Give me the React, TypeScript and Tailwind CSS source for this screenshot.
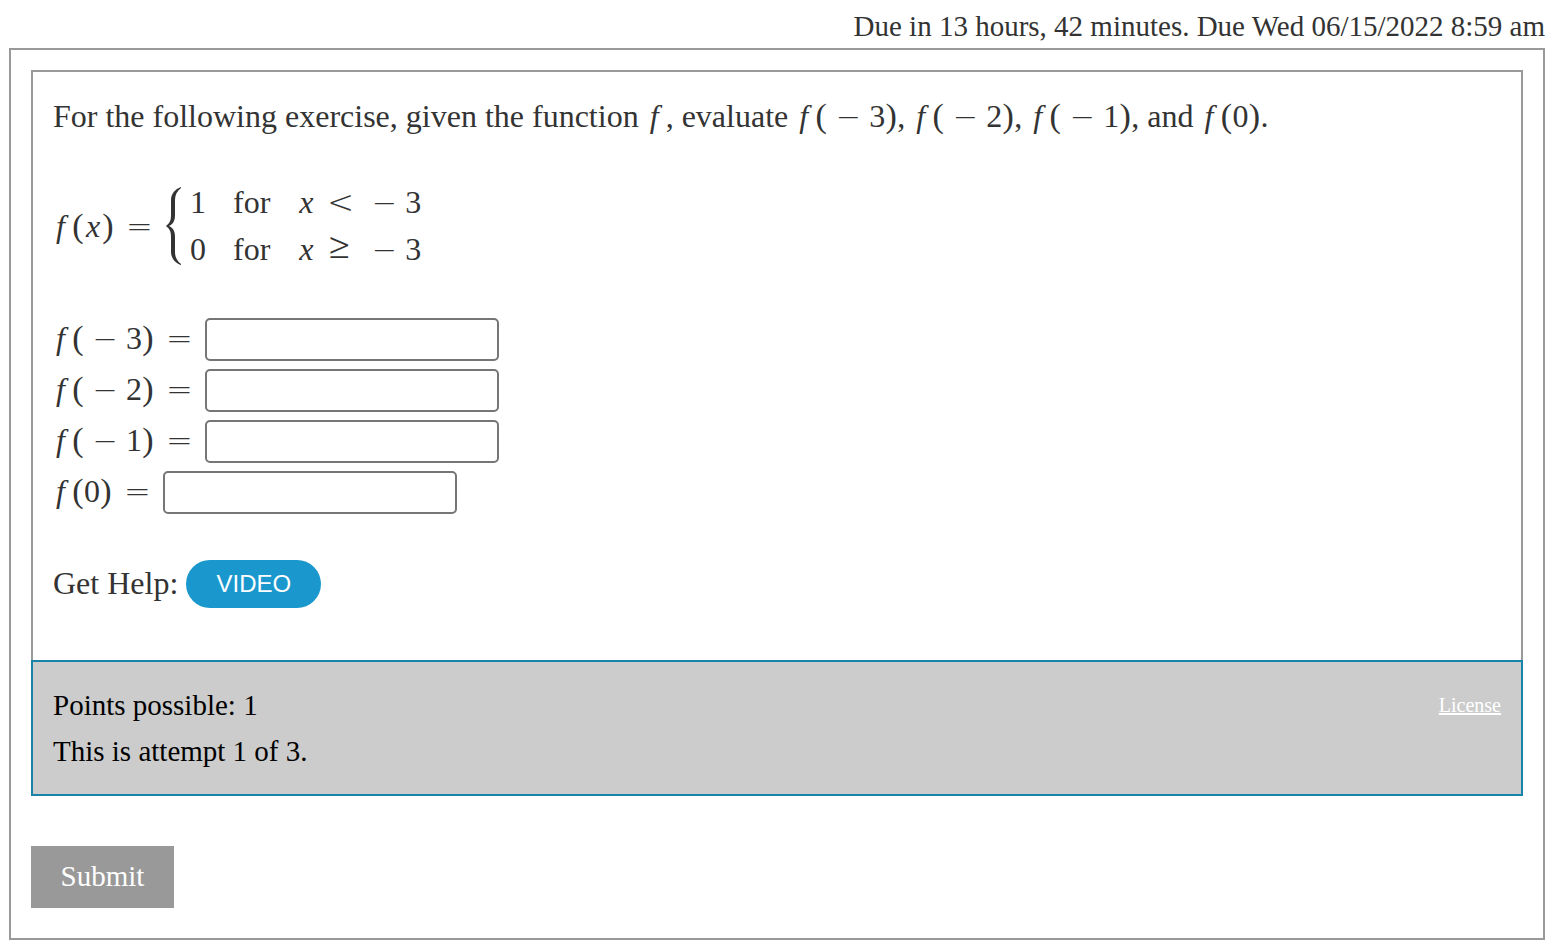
import React from 'react'

type Token = { text: string; kind: 'fn' | 'var' | 'open' | 'close' | 'digit' | 'sign' | 'rel' | 'relWide' | 'word' }

const tokenStyles = {
  fn: 'w-[19px] pl-[3px] text-left italic',
  var: 'w-[18px] text-center italic',
  open: 'w-3 text-center text-[34px]',
  close: 'w-3 text-center text-[34px]',
  digit: 'w-4 text-center',
  sign: 'w-[42px] text-center font-["DejaVu_Sans"] text-[30px] font-extralight',
  rel: 'mx-3 w-6 text-center font-["DejaVu_Sans"] text-[32px] font-extralight',
  // DejaVu's extra light cut has no glyph for ≥
  relWide: 'mx-3 flex w-6 justify-center font-["Inter"] text-[42px] leading-8 font-extralight',
  word: 'text-left',
}

function MathText({ tokens }: { tokens: Token[] }) {
  return (
    <span className="inline-flex h-[46px] items-baseline text-[32px] leading-[46px]">
      {tokens.map((token, idx) => (
        <span key={idx} className={tokenStyles[token.kind]}>
          {token.text}
        </span>
      ))}
    </span>
  )
}

// f(arg), where a negative argument gets its own sign token
function call(arg: string): Token[] {
  const tokens: Token[] = [
    { text: 'f', kind: 'fn' },
    { text: '(', kind: 'open' },
  ]
  if (arg.startsWith('-')) tokens.push({ text: '−', kind: 'sign' })
  tokens.push({ text: arg.replace('-', ''), kind: arg === 'x' ? 'var' : 'digit' })
  tokens.push({ text: ')', kind: 'close' })
  return tokens
}

const equals: Token = { text: '=', kind: 'rel' }

const cases: { value: string; relation: Token }[] = [
  { value: '1', relation: { text: '<', kind: 'rel' } },
  { value: '0', relation: { text: '≥', kind: 'relWide' } },
]

const answers = ['-3', '-2', '-1', '0']

function Piecewise() {
  return (
    <div className="flex items-center">
      <MathText tokens={[...call('x'), equals]} />
      <svg className="ml-1 h-20 w-4 shrink-0" viewBox="0 0 16 80" fill="#333" aria-hidden="true">
        <path d="M15 1C9 3 5 8 5 14V29C5 34 4 37 0 40C4 43 5 46 5 51V66C5 72 9 77 15 79V78C11 75 9 71 9 66V51C9 45 7 42 3 40C7 38 9 35 9 29V14C9 9 11 5 15 2Z" />
      </svg>
      <div className="ml-2 flex flex-col">
        {cases.map((row) => (
          <div key={row.value} className="flex h-[47px] items-baseline gap-[27px]">
            <MathText tokens={[{ text: row.value, kind: 'digit' }]} />
            <MathText tokens={[{ text: 'for', kind: 'word' }]} />
            <MathText
              tokens={[
                { text: 'x', kind: 'var' },
                row.relation,
                { text: '−', kind: 'sign' },
                { text: '3', kind: 'digit' },
              ]}
            />
          </div>
        ))}
      </div>
    </div>
  )
}

export default function App() {
  return (
    <div className="min-h-screen bg-white pr-[21px] pb-[5px] pl-[9px] font-['Liberation_Serif',serif] text-[#333]">
      <header className="flex h-12 items-center justify-end pt-1 text-[29px] leading-8">
        Due in 13 hours, 42 minutes. Due Wed 06/15/2022 8:59 am
      </header>
      <form className="border-2 border-[#999] px-5 pt-5 pb-[30px]" onSubmit={(e) => e.preventDefault()}>
        <section className="border-2 border-b-0 border-[#999] px-5 pt-[21px] pb-[52px]">
          <p className="text-[32px] leading-[46px]">
            For the following exercise, given the function{' '}
            <MathText tokens={[{ text: 'f', kind: 'fn' }]} />, evaluate <MathText tokens={call('-3')} />,{' '}
            <MathText tokens={call('-2')} />, <MathText tokens={call('-1')} />, and{' '}
            <MathText tokens={call('0')} />.
          </p>
          <div className="mt-10">
            <Piecewise />
          </div>
          <div className="mt-[41px]">
            {answers.map((arg) => (
              <div key={arg} className="flex h-[51px] items-center">
                <label htmlFor={`answer${arg}`} className="pb-1">
                  <MathText tokens={[...call(arg), equals]} />
                </label>
                <input
                  id={`answer${arg}`}
                  type="text"
                  className="ml-[3px] h-[43px] w-[294px] rounded-[5px] border-2 border-[#767676] px-2 text-[29px]"
                />
              </div>
            ))}
          </div>
          <div className="mt-[42px] flex items-center gap-2 text-[32px] leading-[46px]">
            <span className="pb-0.5">Get Help:</span>
            <button
              type="button"
              className="h-12 w-[135px] rounded-full bg-[#1a98cd] font-['Liberation_Sans',sans-serif] text-[24px] leading-8 text-white"
            >
              VIDEO
            </button>
          </div>
        </section>
        <section className="flex justify-between border-2 border-[#1783a9] bg-[#ccc] px-5 py-5 text-[29px] leading-[46px] text-black">
          <div>
            <p>Points possible: 1</p>
            <p>This is attempt 1 of 3.</p>
          </div>
          <a href="#" className="text-[20px] text-white underline decoration-2">
            License
          </a>
        </section>
        <button type="submit" className="mt-[50px] block h-[62px] w-[143px] bg-[#999] text-[29px] text-white">
          Submit
        </button>
      </form>
    </div>
  )
}
